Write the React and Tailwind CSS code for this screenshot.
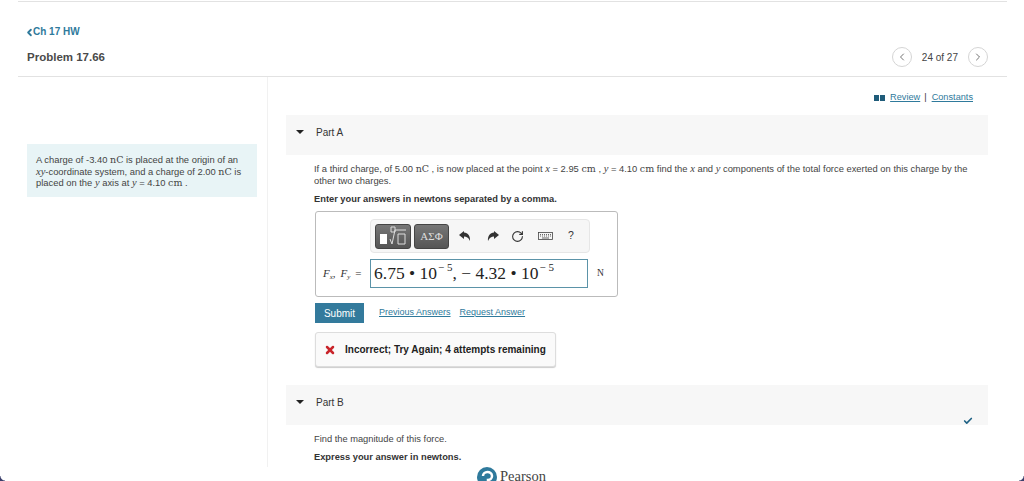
import { ChevronLeft, ChevronRight, Check, X, RotateCw } from "lucide-react";

const Mi = ({ children }) => <i className="font-['Liberation_Serif',serif] text-[10.5px] leading-none">{children}</i>;
const Unit = ({ children }) => <span className="font-['DejaVu_Serif',serif] text-[9.5px] leading-none">{children}</span>;

function PartHeader({ name, children }) {
  return (
    <div className="relative h-10 bg-[#f7f7f7] flex items-center pl-[10px] text-[10px] text-[#333]">
      <span className="mb-[6px] w-0 h-0 border-x-[4px] border-x-transparent border-t-[4px] border-t-[#222]" />
      <span className="ml-[12px] mb-[6px]">{name}</span>
      {children}
    </div>
  );
}

export default function App() {
  return (
    <div className="relative h-[481px] w-[1024px] overflow-hidden bg-white font-['Liberation_Sans',sans-serif] text-[#333]">
      <div className="pt-[1px] pl-[18px] pr-[17px]">
        <div className="border-t border-[#e2e2e2] h-[76px] border-b pl-[9px] pr-[19px] flex flex-col">
          <a className="mt-[24px] flex items-center text-[10px] font-bold leading-[12px] text-[#2f7a9c]">
            <ChevronLeft size={11} strokeWidth={4} className="-ml-[3px]" />
            <span className="ml-[-2px]">Ch 17 HW</span>
          </a>
          <div className="mt-[9px] flex items-center justify-between">
            <h1 className="text-[11.5px] font-bold leading-[14px] text-[#4a4a4a]">Problem 17.66</h1>
            <div className="flex items-center text-[10px] text-[#444]">
              <span className="w-5 h-5 rounded-full border border-[#d5d5d5] flex items-center justify-center"><ChevronLeft size={12} strokeWidth={1.5} /></span>
              <span className="mx-[10px]">24 of 27</span>
              <span className="w-5 h-5 rounded-full border border-[#d5d5d5] flex items-center justify-center"><ChevronRight size={12} strokeWidth={1.5} /></span>
            </div>
          </div>
        </div>
      </div>

      <div className="flex h-[390px] pl-[27px]">
        <div className="w-[241px] shrink-0 border-r border-[#f1f1f1] pr-[10px] pt-[67px]">
          <div className="h-[53px] bg-[#e8f4f6] px-[9px] pt-[10px] text-[9.4px] leading-[11.5px] text-[#444]">
            A charge of -3.40 <Unit>nC</Unit> is placed at the origin of an <Mi>xy</Mi>-coordinate system, and a charge of 2.00 <Unit>nC</Unit> is placed on the <Mi>y</Mi> axis at <Mi>y</Mi> = 4.10 <Unit>cm</Unit> .
          </div>
        </div>

        <div className="ml-[18px] w-[702px]">
          <div className="h-[38px] pt-[15px] pr-[15px] flex justify-end items-start text-[9.2px] leading-[11px] text-[#2f7a9c]">
            <span className="flex items-center">
              <svg width="11" height="6" viewBox="0 0 11 6" className="mr-[5px]"><rect width="5" height="6" fill="#1f5c7a" /><rect x="6" width="5" height="6" fill="#1f5c7a" /></svg>
              <span className="underline">Review</span>
              <span className="ml-[4px] mr-[5px] text-[#333]">|</span>
              <span className="underline">Constants</span>
            </span>
          </div>

          <PartHeader name="Part A" />

          <div className="pl-[28px] pr-[18px]">
            <p className="mt-[8px] text-[9.4px] leading-[11.5px] text-[#444]">
              If a third charge, of 5.00 <Unit>nC</Unit> , is now placed at the point <Mi>x</Mi> = 2.95 <Unit>cm</Unit> , <Mi>y</Mi> = 4.10 <Unit>cm</Unit> find the <Mi>x</Mi> and <Mi>y</Mi> components of the total force exerted on this charge by the other two charges.
            </p>
            <p className="mt-[8px] text-[9.3px] font-bold leading-[11px] text-[#333]">Enter your answers in newtons separated by a comma.</p>

            <div className="ml-[1px] mt-[6px] w-[303px] h-[86px] rounded-[3px] border border-[#bbb] pl-[54px] pt-[7px]">
              <div className="w-[220px] h-[34px] rounded-[4px] border border-[#e6e6e6] bg-[#f6f6f6] flex items-center pl-[4px] text-[#333]">
                <span className="w-[36px] h-[25px] rounded-[3px] border border-[#444] bg-gradient-to-b from-[#777] to-[#555] flex items-center justify-center">
                  <svg width="30" height="20" viewBox="0 0 30 20" fill="none" stroke="#ddd" strokeWidth="1">
                    <rect x="2" y="8" width="7" height="10" fill="#fff" stroke="none" />
                    <path d="M12 13l2 5 3-14h11M20 8h7v10h-7z" />
                    <path d="M13 1h4v5h-4z" />
                  </svg>
                </span>
                <span className="ml-[3px] w-[35px] h-[25px] rounded-[3px] border border-[#444] bg-gradient-to-b from-[#777] to-[#555] flex items-center justify-center font-['Liberation_Serif',serif] text-[11px] text-[#ddd]">ΑΣΦ</span>
                <svg width="12" height="12" viewBox="0 0 12 12" className="ml-[10px]"><path d="M5 1L0 5l5 4V6.5c2.5 0 4.5 1 6 4.5.5-5-2-8-6-8.500z" fill="#333" /></svg>
                <svg width="12" height="12" viewBox="0 0 12 12" className="ml-[16px] -scale-x-100"><path d="M5 1L0 5l5 4V6.5c2.5 0 4.5 1 6 4.5.5-5-2-8-6-8.500z" fill="#333" /></svg>
                <RotateCw size={13} strokeWidth={2} className="ml-[12px]" />
                <svg width="15" height="8" viewBox="0 0 15 8" className="ml-[14px]" fill="none" stroke="#444" strokeWidth="0.8">
                  <rect x="0.5" y="0.5" width="14" height="7" />
                  <path d="M2 2.500h11M2 4h11" strokeDasharray="1 1" />
                  <path d="M4 6h7" />
                </svg>
                <span className="ml-[15px] text-[10.5px]">?</span>
              </div>
              <div className="-ml-[47px] mt-[6px] flex items-center">
                <span className="w-[47px] shrink-0 font-['Liberation_Serif',serif] italic text-[11px] whitespace-nowrap">F<sub className="text-[7px]">x</sub><span className="mr-[5px]">,</span>F<sub className="text-[7px]">y</sub> <span className="ml-[2px] not-italic">=</span></span>
                <div className="w-[218px] h-[29px] shrink-0 border border-[#5b93a8] flex items-center pl-[3px] font-['Liberation_Serif',serif] text-[17.5px] text-[#222] whitespace-nowrap">
                  6.75 • 10<sup className="text-[11px] -top-[7px] ml-[1px]">− 5</sup>, − 4.32 • 10<sup className="text-[11px] -top-[7px] ml-[1px]">− 5</sup>
                </div>
                <span className="ml-[9px] shrink-0 font-['Liberation_Serif',serif] text-[9.500px]">N</span>
              </div>
            </div>

            <div className="ml-[1px] mt-[6px] flex items-center">
              <button className="w-[49px] h-[20px] bg-[#337a9c] text-white text-[10px]">Submit</button>
              <span className="ml-[15px] text-[9px] text-[#2f7a9c] underline">Previous Answers</span>
              <span className="ml-[9px] text-[9px] text-[#2f7a9c] underline">Request Answer</span>
            </div>

            <div className="ml-[1px] mt-[9px] w-[241px] h-[35px] rounded-[3px] border border-[#ddd] shadow-[0_1px_1px_#ccc] bg-[#fafafa] flex items-center pl-[8px] text-[10px] font-bold text-[#222]">
              <X size={12} strokeWidth={5} className="text-[#c9252b]" />
              <span className="ml-[9px] whitespace-nowrap">Incorrect; Try Again; 4 attempts remaining</span>
            </div>
          </div>

          <div className="mt-[18px]">
            <PartHeader name="Part B">
              <Check size={10} strokeWidth={4} className="absolute right-[15px] -bottom-[1px] text-[#1f6285]" />
            </PartHeader>
          </div>

          <div className="pl-[28px] text-[9.3px] leading-[11px] text-[#444]">
            <p className="mt-[9px]">Find the magnitude of this force.</p>
            <p className="mt-[7px] font-bold text-[#333]">Express your answer in newtons.</p>
          </div>
        </div>
      </div>

      <div className="absolute left-[477px] top-[466px] flex items-center">
        <svg width="20" height="20" viewBox="0 0 20 20">
          <circle cx="10" cy="10" r="10" fill="#2f7a9c" />
          <path d="M6 9a4.500 4 0 1 1 5 4v3" fill="none" stroke="#fff" strokeWidth="2.500" />
        </svg>
        <span className="ml-[3px] font-['Liberation_Serif',serif] text-[14.5px] text-[#444]">Pearson</span>
      </div>

      <div className="absolute left-0 bottom-0 w-[5px] h-[5px] bg-[radial-gradient(circle_at_100%_0,transparent_4px,#3b3f6b_5px)]" />
      <div className="absolute right-0 bottom-0 w-[5px] h-[5px] bg-[radial-gradient(circle_at_0_0,transparent_4px,#3b3f6b_5px)]" />
    </div>
  );
}
